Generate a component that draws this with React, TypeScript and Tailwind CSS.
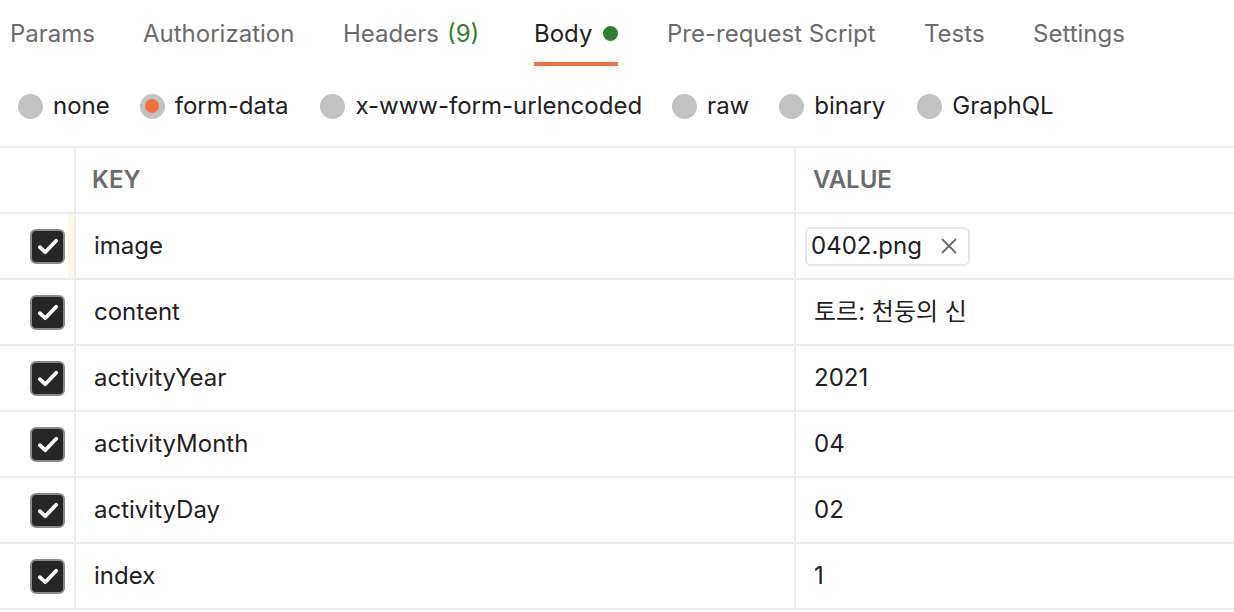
import React from "react";

const tabs = [
  { label: "Params", w: "w-[133px]" },
  { label: "Authorization", w: "w-[200px]" },
  { label: "Headers", count: "(9)", w: "w-[191px]" },
  { label: "Body", active: true, w: "w-[133px]" },
  { label: "Pre-request Script", w: "w-[257px]" },
  { label: "Tests", w: "w-[109px]" },
  { label: "Settings", w: "" },
];

const radios = [
  { label: "none", mr: "mr-[30px]" },
  { label: "form-data", active: true, mr: "mr-[32px]" },
  { label: "x-www-form-urlencoded", mr: "mr-[30px]" },
  { label: "raw", mr: "mr-[30px]" },
  { label: "binary", mr: "mr-[32px]" },
  { label: "GraphQL", mr: "" },
];

const rows: { key: string; value: string; file?: boolean }[] = [
  { key: "image", value: "0402.png", file: true },
  { key: "content", value: "토르: 천둥의 신" },
  { key: "activityYear", value: "2021" },
  { key: "activityMonth", value: "04" },
  { key: "activityDay", value: "02" },
  { key: "index", value: "1" },
];

function Check() {
  return (
    <div className="flex h-[35px] w-[35px] items-center justify-center rounded-[6px] border-2 border-[#8a8a8a] bg-[#262626]">
      <svg width="22" height="17" viewBox="0 0 22 17" fill="none">
        <path d="M2.8 9.2l5.4 5L19.2 2.8" stroke="white" strokeWidth="3.8" strokeLinecap="round" strokeLinejoin="round" />
      </svg>
    </div>
  );
}

export default function App() {
  return (
    <div
      className="h-[612px] w-[1234px] overflow-hidden bg-white text-[#212121]"
      style={{ fontFamily: "Inter, 'Noto Sans CJK KR', sans-serif" }}
    >
      {/* Tabs */}
      <div className="flex h-[66px] items-stretch pl-[10px] text-[24px]">
        {tabs.map((t) => (
          <div key={t.label} className={`flex shrink-0 items-stretch ${t.w}`}>
            <div
              className={`relative flex items-center pt-[1px] ${t.active ? "text-[#212121]" : "text-[#6b6b6b]"}`}
            >
              <span className="flex items-center">
                {t.label}
                {t.count && <span className="ml-[8px] text-[#2f7d32]">{t.count}</span>}
                {t.active && <span className="ml-[11px] inline-block h-[15px] w-[15px] rounded-full bg-[#2f7d32]" />}
              </span>
              {t.active && <div className="absolute bottom-0 left-0 right-0 h-[4px] bg-[#ed7040]" />}
            </div>
          </div>
        ))}
      </div>

      {/* Radios */}
      <div className="flex h-[80px] items-center pl-[18px] text-[24px]">
        {radios.map((r) => (
          <div key={r.label} className={`flex items-center ${r.mr}`}>
            <span className="flex h-[25px] w-[25px] items-center justify-center rounded-full bg-[#c2c2c2]">
              {r.active && <span className="h-[14px] w-[14px] rounded-full bg-[#ed7040]" />}
            </span>
            <span className="ml-[10px]">{r.label}</span>
          </div>
        ))}
      </div>

      {/* Table */}
      <div className="border-t-2 border-[#ebebeb]">
        <div className="grid h-[66px] grid-cols-[76px_720px_1fr] border-b-2 border-[#ebebeb]">
          <div className="border-r-2 border-[#ebebeb]" />
          <div className="flex items-center border-r-2 border-[#ebebeb] pl-[16px] text-[24px] font-semibold text-[#6b6b6b]">
            KEY
          </div>
          <div className="flex items-center pl-[17px] text-[24px] font-semibold text-[#6b6b6b]">VALUE</div>
        </div>
        {rows.map((r, i) => (
          <div key={r.key} className="grid h-[66px] grid-cols-[76px_720px_1fr] border-b-2 border-[#ebebeb]">
            <div className="flex items-center border-r-2 border-[#ebebeb]">
              <div className="ml-[30px]">
                <Check />
              </div>
              {i === 0 && <div className="ml-[3px] h-full w-[5px] bg-[#fdf8e6]" />}
            </div>
            <div className="flex items-center border-r-2 border-[#ebebeb] pl-[18px] text-[24px]">{r.key}</div>
            <div className="flex items-center pl-[9px] text-[24px]">
              {r.file ? (
                <div className="flex h-[39px] items-center rounded-[6px] border-2 border-[#e6e6e6] pl-[4px] pr-[10px]">
                  <span>{r.value}</span>
                  <svg className="ml-[18px]" width="18" height="18" viewBox="0 0 18 18" fill="none">
                    <path d="M2.5 2.5l13 13M15.5 2.5l-13 13" stroke="#6b6b6b" strokeWidth="1.8" strokeLinecap="round" />
                  </svg>
                </div>
              ) : (
                <span className="pl-[9px]">{r.value}</span>
              )}
            </div>
          </div>
        ))}
      </div>
    </div>
  );
}
